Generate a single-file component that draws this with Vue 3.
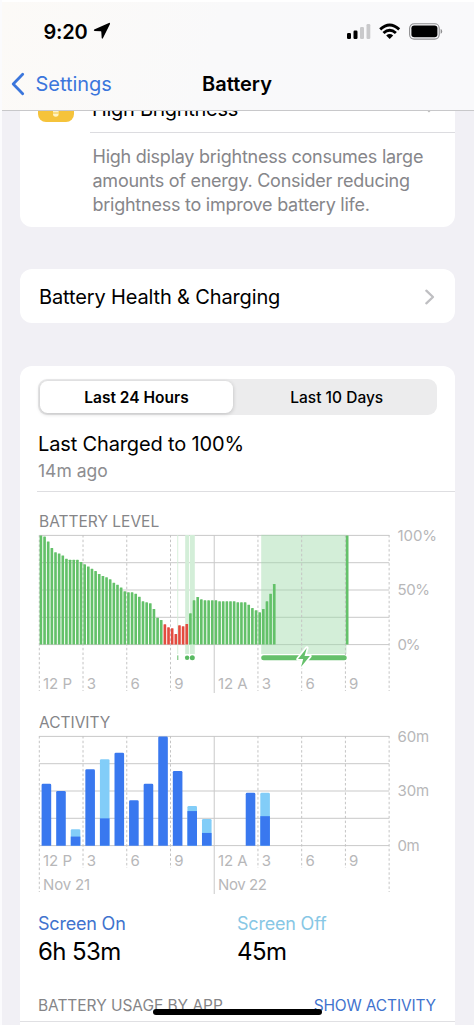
<script setup>
const baseX = 19.3
const step = 3.6458
const levelTops = [
  100, 99, 94.5, 88.5, 84.5, 83.5, 81.7, 78.7, 77.7, 77.7, 77.7, 75.6,
  73.5, 71.6, 69.5, 67.4, 64.6, 62.8, 61.6, 59.8, 56.7, 54.9, 52.4, 48.8,
  47.9, 47.9, 46.6, 43.9, 39.6, 38.7, 37.8, 32.6, 24.7, 22.6, 18.6, 15.9,
  14.9, 9.8, 17.7, 16.8, 18.9, 28.7, 40.5, 43.6, 41.5, 40.5, 40.5, 40.5,
  40.5, 39.6, 39.6, 39.6, 39.6, 39.6, 38.7, 38.7, 38.7, 36.6, 33.5, 31.4,
  29.6, 32.6, 39.6, 46.6, 55.5,
]
const levelBars = levelTops.map((v, i) => ({
  x: baseX + 0.3 + i * step,
  v,
  low: i >= 34 && i <= 40,
}))
levelBars.push({ x: baseX + 0.3 + 84 * step, v: 100, low: false })

const charges = [
  { x: 157.3, w: 0.9 },
  { x: 165.2, w: 3.9 },
  { x: 169.9, w: 4.9 },
  { x: 241.2, w: 85.3 },
]

const ticks = [0, 1, 2, 3, 4, 5, 6, 7, 8].map((i) => ({
  x: baseX + i * 43.73,
  solid: i === 4,
  outer: i === 0 || i === 8,
  label: ['12 P', '3', '6', '9', '12 A', '3', '6', '9', ''][i],
}))

const activity = [
  [0, 34, 0], [1, 30, 0], [2, 5, 4], [3, 42, 0], [4, 15, 32.5], [5, 51, 0],
  [6, 25, 0], [7, 34, 0], [8, 60, 0], [9, 41, 0], [10, 19, 2.8], [11, 7, 7.7],
  [14, 29, 0], [15, 16.2, 12.8],
].map(([h, on, off]) => ({ x: 21.6 + h * 14.58, on: on * 1.822, off: off * 1.822 }))

const top = (x, y, w, h) =>
  `M${x} ${y + h}V${y + 1.3}q0-1.3 1.3-1.3h${w - 2.6}q1.3 0 1.3 1.3V${y + h}z`
</script>

<template>
  <div class="phone">
    <header class="bar">
      <div class="status">
        <span class="time">9:20</span>
        <svg class="loc" width="18" height="18" viewBox="0 0 18 18"><path d="M15.900.9 1.200 7.600q-1 .8.300 1.300l6.300.4q.5 0 .5.500l.4 6.200q.5 1.300 1.300.100L17 1.900q.2-1.200-1.100-1z" /></svg>
        <svg class="sys" width="100" height="20" viewBox="0 0 100 20">
          <rect x="1" y="12" width="4" height="6" rx="1.2" />
          <rect x="7.5" y="9.5" width="4" height="8.5" rx="1.2" />
          <rect x="14" y="6" width="4" height="12" rx="1.2" fill="#c9c9cb" />
          <rect x="20.5" y="3" width="3.8" height="15" rx="1.2" fill="#c9c9cb" />
          <g fill="none" stroke="#000" stroke-width="2.9">
            <path d="M34.2 8.3Q43.7-.2 53.2 8.3" />
            <path d="M37.5 12q6.2-5.7 12.4 0" />
          </g>
          <path d="M40.2 14.4q3.5-2.7 7 0L43.7 18z" />
          <rect x="63.6" y="2.7" width="29.6" height="15.4" rx="4.5" fill="none" stroke="#8f8f91" stroke-width="1.1" />
          <rect x="65.4" y="4.5" width="26" height="11.8" rx="2.8" />
          <path d="M94.6 8q1.600.5 1.600 2.400t-1.600 2.400z" fill="#8f8f91" />
        </svg>
      </div>
      <nav class="nav">
        <a class="back">
          <svg width="14" height="24" viewBox="0 0 14 24"><path d="M11.7 2.3 2.2 12l9.5 9.7" fill="none" stroke="#3b76dc" stroke-width="2.8" stroke-linecap="round" stroke-linejoin="round" /></svg>
          <span>Settings</span>
        </a>
        <h1>Battery</h1>
      </nav>
    </header>

    <main class="content">
      <section class="card insight">
        <div class="insight-row">
          <div class="sun"><svg width="36" height="36" viewBox="0 0 36 36"><path d="M15 18h5.6v10q0 2.8-2.8 2.8T15 28z" fill="#fff3c4" /><path d="M15 24h5.600M15 27h5.600" stroke="#f4c63f" /></svg></div>
          <div class="insight-title">High Brightness</div>
          <svg class="down" width="14" height="8" viewBox="0 0 14 8"><path d="m2 1 5 5 5-5" fill="none" stroke="#bbb" stroke-width="2" /></svg>
        </div>
        <p class="desc">High display brightness consumes large<br />amounts of energy. Consider reducing<br />brightness to improve battery life.</p>
      </section>

      <section class="card health">
        <span>Battery Health &amp; Charging</span>
        <svg width="12" height="18" viewBox="0 0 12 18"><path d="m2.300 2.700 6.700 6.300-6.700 6.300" fill="none" stroke="#bfbfc2" stroke-width="2.300" stroke-linecap="round" stroke-linejoin="round" /></svg>
      </section>

      <section class="card usage">
        <div class="segment">
          <div class="seg on">Last 24 Hours</div>
          <div class="seg off">Last 10 Days</div>
        </div>
        <div class="charged">Last Charged to 100%</div>
        <div class="ago">14m ago</div>
        <div class="rule"></div>

        <h2 class="cap level-cap">BATTERY LEVEL</h2>
        <svg class="chart" width="435" height="176" viewBox="0 -10 435 176">
          <path v-for="n in 5" :key="n" :d="`M19.300 ${5.4 + (n - 1) * 27.300}H369.200`" stroke="#c9c9c9" />
          <rect v-for="(c, i) in charges" :key="'c' + i" :x="c.x" y="5" :width="c.w" height="119" fill="#d3eed8" />
          <path v-for="n in 5" :key="'h' + n" :d="`M241.200 ${5.4 + (n - 1) * 27.300}h85.300`" stroke="#b5d0ba" />
          <g v-for="t in ticks" :key="t.x">
            <path v-if="t.solid" :d="`M${t.x} 5V163`" stroke="#c9c9c9" />
            <path v-else :d="`M${t.x} 5V161`" stroke="#c4c4c4" stroke-dasharray="2.500 2.200" />
            <text :x="t.x + 3.700" y="159" class="axis">{{ t.label }}</text>
          </g>
          <rect v-for="b in levelBars" :key="b.x" :x="b.x" :y="114.600 - b.v * 1.092" width="2.650" :height="b.v * 1.092" rx=".4" :fill="b.low ? '#e34b3f' : '#63c169'" />
          <rect x="157.300" y="125.400" width="1" height="4.600" fill="#63bd6a" />
          <circle cx="167.100" cy="127.700" r="2.200" fill="#58ba61" />
          <circle cx="172.300" cy="127.700" r="2.500" fill="#58ba61" />
          <rect x="241.200" y="125.200" width="85.500" height="5" rx="2.500" fill="#65c06b" />
          <path d="m286.800 118-8.800 11h5.200l-2.200 7.900 8.900-10.800h-5.400z" fill="#65c06b" stroke="#fff" stroke-width="3.600" paint-order="stroke" stroke-linejoin="round" />
          <text x="377.600" y="10.600" class="axis" textLength="39.500">100%</text>
          <text x="377.600" y="65.200" class="axis" textLength="32.500">50%</text>
          <text x="377.600" y="119.800" class="axis" textLength="23">0%</text>
        </svg>

        <h2 class="cap activity-cap">ACTIVITY</h2>
        <svg class="chart" width="435" height="176" viewBox="0 -10 435 176">
          <path v-for="n in 5" :key="n" :d="`M19.300 ${5.4 + (n - 1) * 27.300}H369.200`" stroke="#c9c9c9" />
          <g v-for="t in ticks" :key="t.x">
            <path v-if="t.solid" :d="`M${t.x} 5V163`" stroke="#c9c9c9" />
            <path v-else :d="`M${t.x} 5V${t.outer ? 161 : 137}`" stroke="#c4c4c4" stroke-dasharray="2.500 2.200" />
            <text :x="t.x + 3.700" y="134.500" class="axis">{{ t.label }}</text>
          </g>
          <g v-for="a in activity" :key="a.x">
            <path :d="top(a.x, 114.700 - a.on - a.off, 9.600, a.on + a.off)" :fill="a.off ? '#82cdf8' : '#3978ef'" />
            <rect v-if="a.off" :x="a.x" :y="114.700 - a.on" width="9.600" :height="a.on" fill="#3978ef" />
          </g>
          <text x="23" y="159" class="axis" textLength="47">Nov 21</text>
          <text x="198" y="159" class="axis" textLength="49">Nov 22</text>
          <text x="377.600" y="10.600" class="axis" textLength="31.500">60m</text>
          <text x="377.600" y="65.200" class="axis" textLength="31.500">30m</text>
          <text x="377.600" y="119.800" class="axis" textLength="22">0m</text>
        </svg>

        <div class="totals">
          <div><div class="lab blue">Screen On</div><div class="val">6h 53m</div></div>
          <div><div class="lab sky">Screen Off</div><div class="val">45m</div></div>
        </div>

        <div class="apps">
          <span>BATTERY USAGE BY APP</span>
          <a class="show">SHOW ACTIVITY</a>
        </div>
      </section>
    </main>
    <div class="home"></div>
  </div>
</template>

<style>
body { background: #f1f0f5; }
</style>

<style scoped>
.phone {
  position: relative;
  box-sizing: border-box;
  width: 474px;
  height: 1025px;
  overflow: hidden;
  background: #f1f0f5;
  border-left: 2px solid #fbfbfd;
  font-family: Inter, "Liberation Sans", sans-serif;
  color: #000;
}
.bar {
  position: relative;
  z-index: 1;
  box-sizing: border-box;
  height: 111px;
  border-top: 2px solid #fff;
  border-bottom: 1px solid #c8c8ca;
  background: linear-gradient(105deg, #fcfaf7, #f9f9fa 45%, #f9f9fb);
}
.status { display: flex; align-items: center; height: 58px; padding-left: 41.5px; }
.time { font-size: 20px; font-weight: 600; line-height: 24px; padding-top: 1px; letter-spacing: -0.25px; width: 46px; white-space: nowrap; }
.loc { margin-left: 3.5px; }
.sys { margin-left: 234.5px; }
.nav { display: grid; grid-template-columns: 150px 170px 1fr; align-items: center; height: 48px; }
.back { display: flex; align-items: center; gap: 10.5px; padding-left: 9px; color: #3b76dc; font-size: 20px; letter-spacing: -0.05px; }
h1 { margin: 0; text-align: center; font-size: 20px; font-weight: 600; letter-spacing: 0; }
.content { display: flex; flex-direction: column; }
.card { width: 435px; margin-left: 18px; background: #fff; border-radius: 12px; box-sizing: border-box; }
.insight { height: 116px; border-radius: 0 0 12px 12px; }
.insight-row { display: flex; align-items: flex-end; height: 21px; margin-left: 18px; }
.sun { height: 36px; width: 36px; margin-bottom: 10px; border-radius: 8px; background: #f5c33b; }
.insight-title { margin: 0 0 11px 18px; flex: 1; font-size: 20px; line-height: 24px; letter-spacing: -0.3px; }
.down { margin: 0 19px 19px 0; }
.desc { margin: 0 0 0 70px; border-top: 1px solid #dcdce0; padding: 12px 0 0 2.5px; font-size: 18px; line-height: 24.2px; letter-spacing: -0.25px; color: #86868a; white-space: nowrap; }
.health { display: flex; align-items: center; justify-content: space-between; height: 54px; margin-top: 42px; padding: 1px 19px 0; font-size: 20px; letter-spacing: -0.14px; }
.usage { height: 700px; margin-top: 43px; display: flow-root; }
.segment { display: flex; box-sizing: border-box; width: 398.5px; height: 36px; margin: 13px 0 0 18px; padding: 2px; border-radius: 9px; background: #ececed; }
.seg { flex: 1; display: flex; align-items: center; justify-content: center; font-size: 15.5px; font-weight: 500; padding-top: 1px; box-sizing: border-box; }
.seg.on { flex: 0 0 193px; border-radius: 7.5px; background: #fff; font-weight: 600; box-shadow: 0 1px 4px rgba(0,0,0,.2); }
.seg.off { padding-left: 6px; }
.charged { margin: 17px 0 0 18px; font-size: 20px; line-height: 25px; letter-spacing: -0.15px; }
.ago { margin: 3px 0 0 18px; font-size: 17.5px; line-height: 22px; color: #8d8d90; }
.rule { margin: 9px 0 0 17px; height: 1px; background: #dedee1; }
.cap { margin: 0 0 0 19px; font-size: 15.5px; font-weight: 400; line-height: 20px; color: #858588; }
.level-cap { margin-top: 20px; }
.activity-cap { margin-top: 17px; }
.chart { display: block; margin-top: -12px; }
.axis { font-family: Inter, sans-serif; font-size: 15px; fill: #b7b7b9; }
.totals { display: grid; grid-template-columns: 199px 1fr; margin: 15px 0 0 18px; }
.lab { font-size: 18px; line-height: 24px; letter-spacing: -0.2px; }
.blue { color: #3f73ce; }
.sky { color: #87c7e5; }
.val { margin-top: 1px; font-size: 24px; line-height: 30px; letter-spacing: -0.6px; }
.apps { display: flex; justify-content: space-between; align-items: center; height: 31px; margin-top: 23px; padding: 0 19px 0 18px; border-bottom: 1px solid #e0e0e3; font-size: 15.5px; letter-spacing: -0.05px; color: #858588; }
.show { color: #3f73ce; font-size: 15.5px; letter-spacing: -0.15px; }
.home { position: absolute; left: 151px; bottom: 10px; width: 169px; height: 6px; border-radius: 3px; background: #000; }
</style>
